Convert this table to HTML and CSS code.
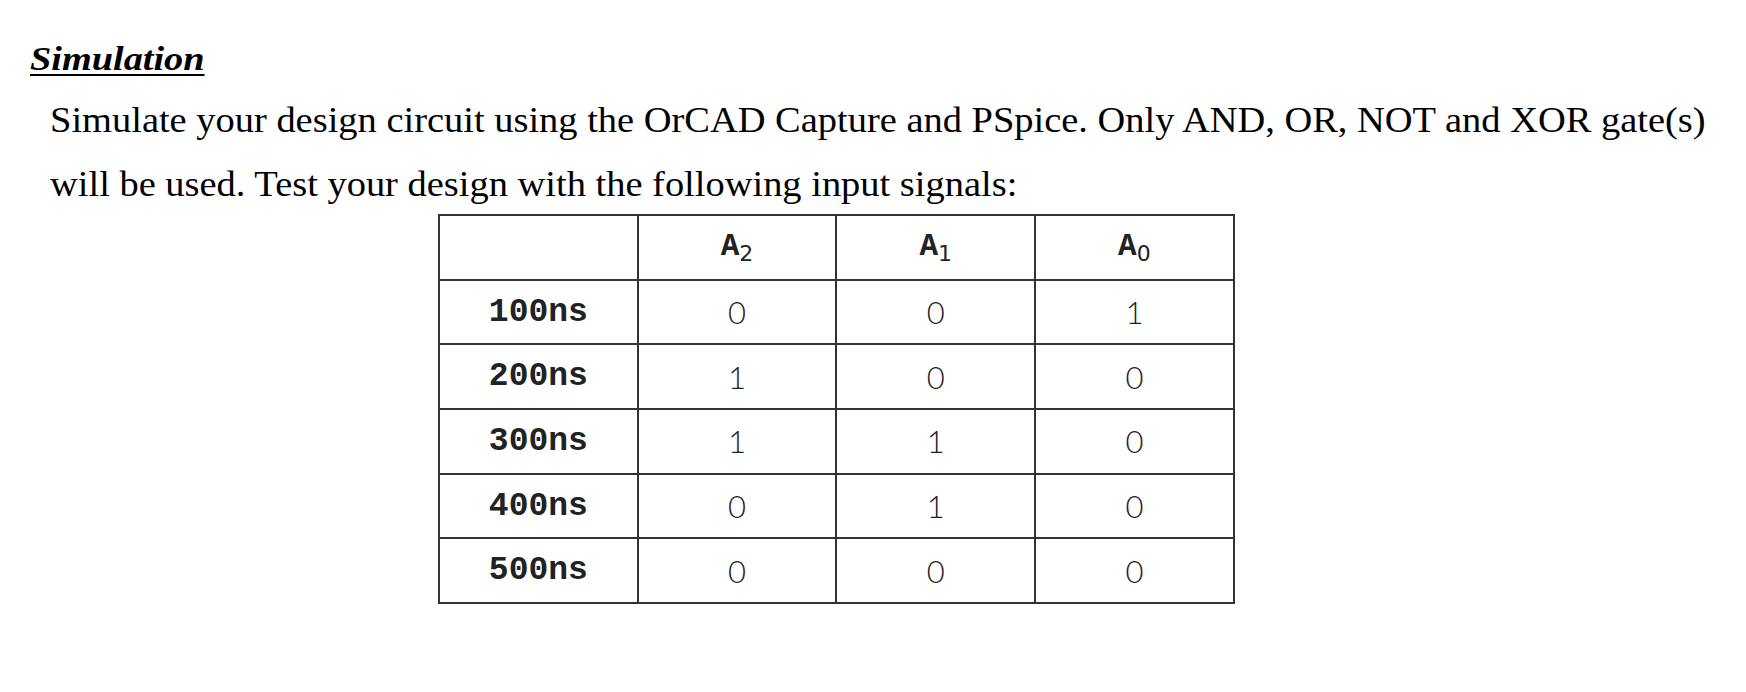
FILE: index.html
```html
<!DOCTYPE html>
<html>
<head>
<meta charset="utf-8">
<link rel="stylesheet" href="styles.css">
</head>
<body>
<div class="page">
  <h2 class="title">Simulation</h2>
  <div class="content">
    <p class="text">Simulate your design circuit using the OrCAD Capture and PSpice. Only AND, OR, NOT and XOR gate(s) will be used. Test your design with the following input signals:</p>
    <table class="signals">
      <thead>
        <tr><th></th><th>A<sub>2</sub></th><th>A<sub>1</sub></th><th>A<sub>0</sub></th></tr>
      </thead>
      <tbody>
        <tr><td class="time">100ns</td><td>0</td><td>0</td><td>1</td></tr>
        <tr><td class="time">200ns</td><td>1</td><td>0</td><td>0</td></tr>
        <tr><td class="time">300ns</td><td>1</td><td>1</td><td>0</td></tr>
        <tr><td class="time">400ns</td><td>0</td><td>1</td><td>0</td></tr>
        <tr><td class="time">500ns</td><td>0</td><td>0</td><td>0</td></tr>
      </tbody>
    </table>
  </div>
</div>
</body>
</html>
```
FILE: styles.css
```css
html, body {
  margin: 0;
  padding: 0;
  background: #ffffff;
}
.page {
  padding: 39px 0 0 30px;
  font-family: "Liberation Serif", "Times New Roman", serif;
  color: #000;
}
.title {
  width: fit-content;
  margin: 0;
  font-size: 33px;
  font-weight: bold;
  font-style: italic;
  line-height: 40px;
  text-decoration: underline;
  text-decoration-thickness: 2px;
  text-underline-offset: 4px;
  transform: scaleX(1.16);
  transform-origin: left top;
}
.content {
  padding-left: 20px;
}
.text {
  margin: 9px 0 0 0;
  font-size: 36px;
  line-height: 64px;
  width: 1575px;
  transform: scaleX(1.068);
  transform-origin: left top;
}
.signals {
  margin: -2px 0 0 388px;
  border-collapse: collapse;
  border: 2px solid #333;
}
.signals th, .signals td {
  border: 2px solid #333;
  width: 196.7px;
  height: 62.7px;
  padding: 0;
  text-align: center;
  vertical-align: middle;
  font-family: "Lato", "Liberation Sans", sans-serif;
  font-weight: 300;
  font-size: 31px;
  color: #222;
}
.signals th {
  font-family: "Liberation Mono", "Courier New", monospace;
  font-weight: bold;
  font-size: 31px;
}
.signals th sub {
  font-family: "DejaVu Sans", sans-serif;
  font-weight: normal;
  font-size: 22px;
  vertical-align: -6px;
}
.signals td.time {
  font-family: "Liberation Mono", "Courier New", monospace;
  font-weight: bold;
  font-size: 33px;
}
```
